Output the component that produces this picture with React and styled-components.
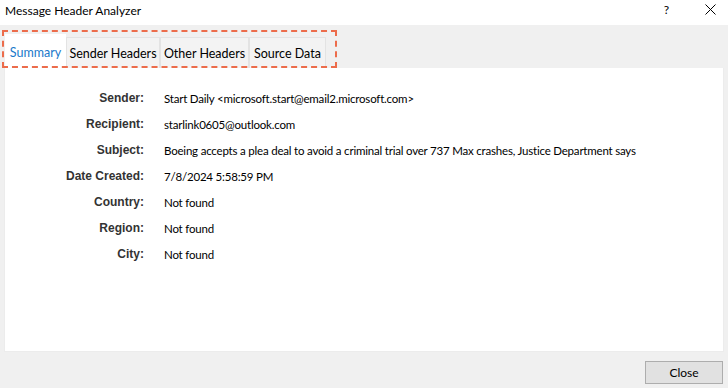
import React, { useState } from "react";
import styled, { createGlobalStyle } from "styled-components";

const GlobalStyle = createGlobalStyle`
  html, body {
    margin: 0;
    padding: 0;
    background: #f0f0f0;
  }
  #root {
    width: 728px;
    height: 388px;
  }
`;

const fields = [
  ["Sender:", "Start Daily <microsoft.start@email2.microsoft.com>"],
  ["Recipient:", "starlink0605@outlook.com"],
  ["Subject:", "Boeing accepts a plea deal to avoid a criminal trial over 737 Max crashes, Justice Department says"],
  ["Date Created:", "7/8/2024 5:58:59 PM"],
  ["Country:", "Not found"],
  ["Region:", "Not found"],
  ["City:", "Not found"],
];

const tabs = [
  { name: "Summary", width: 61 },
  { name: "Sender Headers", width: 94 },
  { name: "Other Headers", width: 89 },
  { name: "Source Data", width: 77 },
];

function App() {
  const [active, setActive] = useState(0);

  return (
    <StWindow>
      <GlobalStyle />
      <StTitleBar>
        <StTitle>Message Header Analyzer</StTitle>
        <StTitleButtons>
          <StHelp>?</StHelp>
          <StCloseIcon width="11" height="11" viewBox="0 0 11 11">
            <path d="M0.5 0.5 L10.5 10.5 M10.5 0.5 L0.5 10.5" stroke="#000" strokeWidth="1" fill="none" />
          </StCloseIcon>
        </StTitleButtons>
      </StTitleBar>

      <StBody>
        <StTabBar>
          {tabs.map((t, i) => (
            <StTab key={t.name} $active={i === active} $width={t.width} onClick={() => setActive(i)}>
              {t.name}
            </StTab>
          ))}
          <StHighlight />
        </StTabBar>

        <StPanel>
          <StGrid>
            {fields.map(([label, value]) => (
              <React.Fragment key={label}>
                <StLabel>{label}</StLabel>
                <StValue>{value}</StValue>
              </React.Fragment>
            ))}
          </StGrid>
        </StPanel>
      </StBody>

      <StFooter>
        <StButton>Close</StButton>
      </StFooter>
    </StWindow>
  );
}

export default App;

const StWindow = styled.div`
  width: 728px;
  height: 388px;
  display: flex;
  flex-direction: column;
  background: #f0f0f0;
  font-family: Lato, "Open Sans", sans-serif;
  font-size: 12px;
  color: #000;
  overflow: hidden;
`;

const StTitleBar = styled.div`
  height: 25px;
  background: #fff;
  display: flex;
  align-items: center;
  justify-content: space-between;
  padding: 0 12px 0 5px;
  flex-shrink: 0;
`;

const StTitle = styled.div`
  font-size: 12px;
  line-height: 14px;
  margin-top: -4px;
`;

const StTitleButtons = styled.div`
  display: flex;
  align-items: center;
  gap: 36px;
  margin-top: -6px;
`;

const StHelp = styled.span`
  font-size: 12px;
  line-height: 12px;
`;

const StCloseIcon = styled.svg`
  display: block;
`;

const StBody = styled.div`
  flex: 1;
  display: flex;
  flex-direction: column;
  padding: 9px 4px 0 4px;
`;

const StTabBar = styled.div`
  position: relative;
  display: flex;
  align-items: flex-end;
  height: 34px;
  padding-left: 1px;
`;

const StTab = styled.div`
  width: ${(p) => p.$width}px;
  height: ${(p) => (p.$active ? 35 : 31)}px;
  box-sizing: border-box;
  display: flex;
  align-items: center;
  justify-content: center;
  background: ${(p) => (p.$active ? "#fff" : "#f3f3f3")};
  border: 1px solid ${(p) => (p.$active ? "#fff" : "#e3e3e3")};
  border-bottom: none;
  color: ${(p) => (p.$active ? "#1979ca" : "#000")};
  font-size: 12.5px;
  padding-top: ${(p) => (p.$active ? 0 : 1)}px;
  margin-bottom: ${(p) => (p.$active ? -1 : 0)}px;
  position: relative;
  z-index: ${(p) => (p.$active ? 1 : 0)};
  cursor: default;
`;

const StHighlight = styled.div`
  position: absolute;
  left: -2px;
  top: -4px;
  width: 335px;
  height: 38px;
  border: 2px dashed #ec6c4b;
  box-sizing: border-box;
  pointer-events: none;
  z-index: 2;
`;

const StPanel = styled.div`
  height: 284px;
  background: #fff;
  border: 1px solid #ececec;
  border-top: none;
  box-sizing: border-box;
`;

const StGrid = styled.div`
  display: grid;
  grid-template-columns: 139px auto;
  column-gap: 20px;
  grid-auto-rows: 26px;
  padding-top: 17px;
  align-items: center;
`;

const StLabel = styled.div`
  text-align: right;
  font-family: "Liberation Sans", Arial, sans-serif;
  font-weight: bold;
  font-size: 12px;
  color: #333;
  white-space: nowrap;
`;

const StValue = styled.div`
  white-space: nowrap;
  font-size: 11.5px;
  letter-spacing: -0.2px;
`;

const StFooter = styled.div`
  height: 36px;
  display: flex;
  justify-content: flex-end;
  align-items: flex-start;
  padding: 9px 5px 0 0;
  box-sizing: border-box;
`;

const StButton = styled.button`
  width: 78px;
  height: 23px;
  background: #e1e1e1;
  border: 1px solid #adadad;
  font-family: Lato, "Open Sans", sans-serif;
  font-size: 12px;
  color: #000;
  padding: 0;
`;
